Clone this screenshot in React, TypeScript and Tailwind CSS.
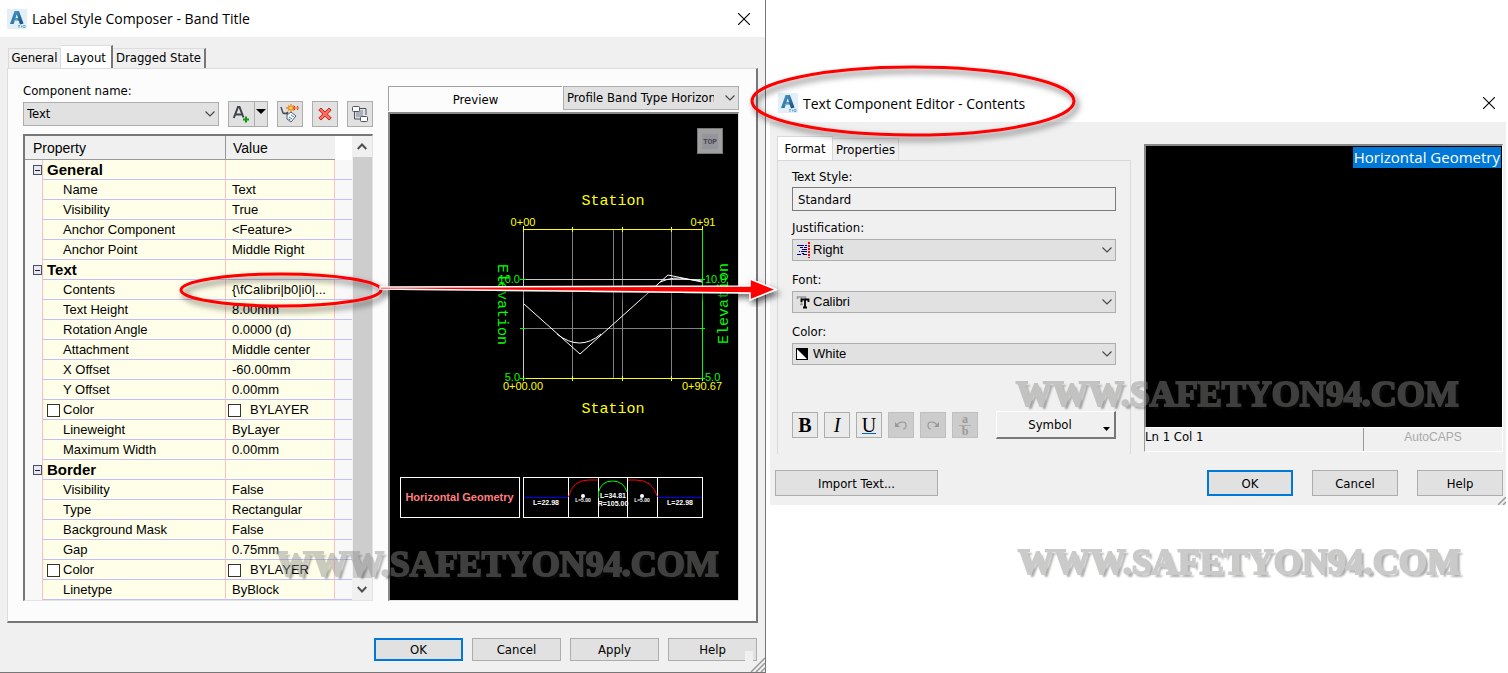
import type { ReactNode } from 'react'

const ui = 'font-["DejaVu_Sans_Condensed","Noto_Sans",sans-serif]'

type Row = { name: string; value?: string; group?: boolean; swatch?: boolean }

const rows: Row[] = [
  { name: 'General', group: true },
  { name: 'Name', value: 'Text' },
  { name: 'Visibility', value: 'True' },
  { name: 'Anchor Component', value: '<Feature>' },
  { name: 'Anchor Point', value: 'Middle Right' },
  { name: 'Text', group: true },
  { name: 'Contents', value: '{\\fCalibri|b0|i0|...' },
  { name: 'Text Height', value: '8.00mm' },
  { name: 'Rotation Angle', value: '0.0000 (d)' },
  { name: 'Attachment', value: 'Middle center' },
  { name: 'X Offset', value: '-60.00mm' },
  { name: 'Y Offset', value: '0.00mm' },
  { name: 'Color', value: 'BYLAYER', swatch: true },
  { name: 'Lineweight', value: 'ByLayer' },
  { name: 'Maximum Width', value: '0.00mm' },
  { name: 'Border', group: true },
  { name: 'Visibility', value: 'False' },
  { name: 'Type', value: 'Rectangular' },
  { name: 'Background Mask', value: 'False' },
  { name: 'Gap', value: '0.75mm' },
  { name: 'Color', value: 'BYLAYER', swatch: true },
  { name: 'Linetype', value: 'ByBlock' },
]

function AppLogo() {
  return (
    <svg className="h-5 w-5 shrink-0" viewBox="0 0 20 20" aria-hidden="true">
      <defs>
        <linearGradient id="logo" x1="0" y1="0" x2="1" y2="1">
          <stop offset="0" stopColor="#4fa3cf" />
          <stop offset="1" stopColor="#124a7c" />
        </linearGradient>
      </defs>
      <rect width="20" height="20" fill="#e3eef6" />
      <path d="M7.5 2H12l4.500 12.500-3.500 1-1.300-3.800H7.800L6.500 15H3z M9.800 5.200 8.400 9.300h2.700z" fill="url(#logo)" fillRule="evenodd" />
      <path d="M3 15l4-3.300 4.700 0-1.200-1.200H8z" fill="#8cc7e6" />
      <path d="M11 16.500h2M11 18h2M14.500 16.500v2M16 16.500h2v2h-2z" stroke="#6aaed6" fill="none" />
    </svg>
  )
}

function CloseButton() {
  return (
    <button type="button" aria-label="Close" className="p-1">
      <svg className="h-3 w-3" viewBox="0 0 12 12" stroke="#000" strokeWidth="1.1">
        <path d="M0 0l12 12M12 0L0 12" />
      </svg>
    </button>
  )
}

function Chevron({ className }: { className: string }) {
  return (
    <svg className={className} viewBox="0 0 10 6" fill="none" stroke="#444" strokeWidth="1.1" aria-hidden="true">
      <path d="M.5.5L5 5 9.500.5" />
    </svg>
  )
}

function DropDown({ label, id, value, size, icon }: { label: string; id: string; value: string; size: string; icon?: ReactNode }) {
  return (
    <div className="relative min-w-0">
      <select
        id={id}
        aria-label={label}
        className={`block w-full appearance-none border border-[#adadad] bg-[#e1e1e1] pr-6 ${size}`}
      >
        <option>{value}</option>
      </select>
      {icon && <span className="pointer-events-none absolute inset-y-0 left-1 flex items-center">{icon}</span>}
      <Chevron className="pointer-events-none absolute right-1 top-1/2 h-[6px] w-[10px] -translate-y-1/2" />
    </div>
  )
}

function DialogButton({ children, primary, className = '' }: { children: ReactNode; primary?: boolean; className?: string }) {
  return (
    <button
      type="button"
      className={`bg-[#e1e1e1] text-center leading-none ${primary ? 'border-2 border-[#0078d7]' : 'border border-[#adadad]'} ${className}`}
    >
      {children}
    </button>
  )
}

function ToolButton({ label, children }: { label: string; children: ReactNode }) {
  return (
    <button
      type="button"
      aria-label={label}
      className="flex h-[26px] w-[26px] shrink-0 items-center justify-center border border-[#adadad] bg-[#e1e1e1]"
    >
      {children}
    </button>
  )
}

function Toolbar() {
  return (
    <div className="flex items-center gap-[9px]">
      <div className="min-w-0 flex-1">
        <DropDown id="component" label="Component name" value="Text" size="h-6 pl-[3px]" />
      </div>
      <div className="flex h-[26px] w-10 shrink-0 border border-[#adadad] bg-[#e1e1e1]">
        <button type="button" aria-label="Create text component" className="flex flex-1 items-center justify-center border-r border-[#adadad]">
          <svg className="h-[18px] w-5" viewBox="0 0 20 18">
            <path d="M1.800 13L6 2h1.500l4 10.500M3.500 9.500h6.500" fill="none" stroke="#3d4450" strokeWidth="2" />
            <path d="M11 14.500h6M14 11.500v6" stroke="#0a9a0a" strokeWidth="2" />
          </svg>
        </button>
        <button type="button" aria-label="Component types" className="flex w-3 justify-center pt-[7px]">
          <svg className="h-[5px] w-[10px]" viewBox="0 0 10 5"><path d="M0 0h10L5 5z" /></svg>
        </button>
      </div>
      <ToolButton label="Copy component">
        <svg className="h-5 w-5" viewBox="0 0 20 20" fill="none">
          <path d="M1 3l2 6c2 1 4 0 5-1M3 9l5 1" stroke="#444b55" strokeWidth="1.400" />
          <path d="M7 11l4-3 5 4-5 6-4-3z" fill="#fff" stroke="#555e6a" />
          <path d="M9 13l3 2M11 11l3 2M8.500 15l2 1" stroke="#38a" />
          <path d="M6 4h10M8 1.500l6 5M14 1.500l-6 5M11 0v8" stroke="#e8861c" strokeWidth="1.300" />
          <path d="M13 4h6M14 2l4 4M18 2l-4 4" stroke="#e02a10" />
          <circle cx="11" cy="4" r="1.500" fill="#ffe34d" />
          <circle cx="16" cy="4" r="1" fill="#ffd34d" />
        </svg>
      </ToolButton>
      <ToolButton label="Delete component">
        <svg className="h-[14px] w-[14px]" viewBox="0 0 14 14">
          <path d="M3 1l4 4 4-4 2.200 2.200L9.300 7l4 4L11 13 7 9.200 3 13 .8 11l4-4-4-4z" fill="#ff6a5c" stroke="#c02a22" />
        </svg>
      </ToolButton>
      <ToolButton label="Component draw order">
        <svg className="h-4 w-4" viewBox="0 0 16 16" stroke="#4a515c" fill="#fff">
          <path d="M7 2.500h7V9" fill="none" />
          <path d="M2.500 6v7H9" fill="none" />
          <rect x="4" y="4" width="7" height="7" fill="#a8b0bc" stroke="none" />
          <rect x=".5" y=".5" width="7" height="5" rx="1" />
          <rect x="8.500" y="10.500" width="7" height="5" rx="1" />
        </svg>
      </ToolButton>
    </div>
  )
}

function PropertyRow({ row }: { row: Row }) {
  const { name, value, group, swatch } = row
  return (
    <tr className="h-5">
      <td className="border-r border-[#ffc0c0] bg-[#f8f8f8] p-0">
        {group && (
          <button type="button" aria-label={`Collapse ${name}`} className="ml-2 flex h-[10px] w-[9px] items-center justify-center border border-[#4a4f60] bg-[#e8e8f4]">
            <span className="h-px w-[5px] bg-[#222]" />
          </button>
        )}
      </td>
      <td className={`border-r border-b border-r-[#ffc0c0] border-b-[#c0c0ff] bg-[#ffffe9] p-0 ${group ? 'pl-1 text-[15px] font-bold' : swatch ? 'pl-1' : 'pl-5'}`}>
        <span className="flex items-center gap-[3px] pt-px leading-[18px]">
          {swatch && <input type="checkbox" aria-label={`Override ${name}`} className="h-[13px] w-[13px] appearance-none border border-[#333] bg-white" />}
          {name}
        </span>
      </td>
      <td className={`border-r border-b border-r-[#ffc0c0] border-b-[#c0c0ff] bg-[#ffffe9] p-0 ${swatch ? 'pl-[2px]' : 'pl-[6px]'}`}>
        <span className="flex items-center gap-[9px] pt-px leading-[18px]">
          {swatch && <span className="h-[13px] w-[13px] border border-[#333] bg-white" />}
          {value}
        </span>
      </td>
      <td className="border-b border-[#c0c0ff] bg-[#f8f8f8] p-0" />
    </tr>
  )
}

function PropertyGrid() {
  return (
    <div className="mt-[7px] flex border-2 border-r border-b border-t-[#777] border-r-[#e3e3e3] border-b-[#e3e3e3] border-l-[#777] font-['Liberation_Sans',sans-serif] text-[13px]">
      <table className="min-w-0 flex-1 table-fixed border-separate border-spacing-0">
        <colgroup>
          <col className="w-[18px]" />
          <col />
          <col className="w-[109px]" />
          <col className="w-[17px]" />
        </colgroup>
        <thead>
          <tr className="h-6 text-left text-sm">
            <th colSpan={2} className="border-r border-b border-[#999] bg-[#f0f0f0] p-0 pl-2 font-normal">Property</th>
            <th className="border-b border-[#999] bg-[#f0f0f0] p-0 pl-[7px] font-normal">Value</th>
            <th className="bg-white p-0" />
          </tr>
        </thead>
        <tbody>
          {rows.map((row, i) => <PropertyRow key={i} row={row} />)}
        </tbody>
      </table>
      <div className="flex w-5 flex-col items-center justify-between bg-[#f0f0f0]">
        <button type="button" aria-label="Scroll up" className="flex h-[21px] items-center">
          <svg className="h-[7px] w-[10px]" viewBox="0 0 10 7" fill="none" stroke="#505050" strokeWidth="2"><path d="M.7 6L5 1.500 9.300 6" /></svg>
        </button>
        <div className="w-[19px] flex-1 bg-[#cdcdcd]" />
        <button type="button" aria-label="Scroll down" className="flex h-[22px] items-center">
          <svg className="h-[7px] w-[10px]" viewBox="0 0 10 7" fill="none" stroke="#505050" strokeWidth="2"><path d="M.7 1L5 5.500 9.300 1" /></svg>
        </button>
      </div>
    </div>
  )
}

function ProfilePreview() {
  return (
    <svg className="block h-[486px] w-full" viewBox="0 0 348 486" fill="none" aria-label="Profile view preview">
      <rect x="307.500" y="14.500" width="25" height="25" fill="#a0a0a0" stroke="#777" />
      <rect x="312" y="20" width="16" height="15" fill="#94949c" />
      <text x="320" y="30" fontSize="7" fontWeight="700" textAnchor="middle" fill="#44444c" fontFamily="Roboto">TOP</text>

      <g shapeRendering="crispEdges">
        <path d="M182.500 115v149M223.500 115v149M232.500 115v149M281.500 115v149M133 214.500h179" stroke="#808080" />
        <path d="M133.500 115v149M133 165.500h179" stroke="#c8c8c8" />
        <path d="M133 115.500h180M133 264.500h180M133.500 112v6M182.500 113v5M232.500 113v5M281.500 113v5M312.500 112v6M182.500 262v5M232.500 262v5M281.500 262v5M133.500 262v5M312.500 262v5" stroke="#ff0" />
        <path d="M312.500 116v148M130 165.500h6M130 214.500h5M130 264.500h6M310 165.500h5M310 214.500h5M310 264.500h5" stroke="#0f0" />
      </g>
      <path d="M134 190l56 50 88-79 34 7M167 220q23 18 44 0M270 168q14-6 26-3l16 2" stroke="#fff" />

      <g fill="#ff0" fontFamily="Liberation Mono" fontSize="15" textAnchor="middle">
        <text x="223" y="91">Station</text>
        <text x="223" y="299">Station</text>
      </g>
      <g fill="#ff0" fontFamily="Liberation Sans" fontSize="11" textAnchor="middle">
        <text x="133" y="112">0+00</text>
        <text x="313" y="112">0+91</text>
        <text x="133" y="276">0+00.00</text>
        <text x="312" y="276">0+90.67</text>
      </g>
      <g fill="#0f0" fontFamily="Liberation Sans" fontSize="11">
        <text x="130" y="169" textAnchor="end">10.0</text>
        <text x="315" y="169">10.0</text>
        <text x="130" y="267" textAnchor="end">5.0</text>
        <text x="315" y="267">5.0</text>
      </g>
      <g fill="#0f0" fontFamily="Liberation Mono" fontSize="15">
        <text transform="translate(108 150) rotate(90)">Elevation</text>
        <text transform="translate(338 230) rotate(-90)">Elevation</text>
      </g>

      <g shapeRendering="crispEdges" stroke="#fff">
        <path d="M134 383.500h44M268 383.500h44" stroke="#00f" />
        <rect x="10.500" y="363.500" width="119" height="40" />
        <rect x="133.500" y="363.500" width="179" height="40" />
        <path d="M178.500 363v40M208.500 363v40M237.500 363v40M267.500 363v40" />
      </g>
      <path d="M178.500 383q4-17 20-17h9M238 366h8q17 0 21.500 17" stroke="#f00" />
      <path d="M208.500 384v-6q3-11 14-11t14.500 11" stroke="#0f0" />
      <text x="69.500" y="387" fontSize="11" fontWeight="700" textAnchor="middle" fill="#ff7f7f" fontFamily="Liberation Sans">Horizontal Geometry</text>
      <g fill="#fff" fontFamily="Liberation Sans" fontSize="7" fontWeight="700" textAnchor="middle">
        <text x="156" y="391">L=22.98</text>
        <text x="290" y="391">L=22.98</text>
        <text x="223" y="384">L=34.81</text>
        <text x="223" y="392">R=105.00</text>
        <text x="193" y="388" fontSize="5">L=5.00</text>
        <text x="252" y="388" fontSize="5">L=5.00</text>
        <circle cx="193" cy="382" r="2" />
        <circle cx="252" cy="382" r="2" />
      </g>
    </svg>
  )
}

function StyleComposer() {
  return (
    <section className="flex min-h-screen flex-col border-r border-b border-[#777] bg-[#f0f0f0]">
      <header className="flex h-[37px] items-center gap-[5px] bg-white pr-[11px] pl-[7px]">
        <AppLogo />
        <h1 className="flex-1 font-['Open_Sans',sans-serif] text-[14px]">Label Style Composer - Band Title</h1>
        <CloseButton />
      </header>

      <div role="tablist" className="mt-2 flex items-end pl-2">
        <button role="tab" className="h-5 w-[53px] border border-b-0 border-[#d9d9d9] pb-[3px] leading-none">General</button>
        <button role="tab" aria-selected="true" className="h-[23px] w-[52px] border-t border-r-2 border-t-[#ddd] border-r-[#777] bg-white leading-none">Layout</button>
        <button role="tab" className="h-5 w-[93px] border-t border-r-2 border-t-[#ddd] border-r-[#777] pb-[3px] leading-none whitespace-nowrap">Dragged State</button>
      </div>

      <div className="mr-[7px] ml-[7px] grid grid-cols-[350fr_351fr] gap-[15px] border-r-2 border-b-2 border-t border-l border-t-[#ddd] border-r-[#777] border-b-[#777] border-l-[#ddd] bg-[#fcfcfc] pr-[17px] pb-5 pl-[15px]">
        <div className="min-w-0 pt-3">
          <label htmlFor="component" className="block h-5 leading-5">Component name:</label>
          <Toolbar />
          <PropertyGrid />
        </div>
        <div className="min-w-0 pt-[17px]">
          <div className="flex h-[26px] items-start">
            <div className="mr-px h-[25px] flex-1 border-t border-l border-[#a0a0a0] text-center leading-[25px]">Preview</div>
            <div className="w-44">
              <DropDown id="band" label="Preview style" value="Profile Band Type Horizontal Geometry" size="h-6 pl-[3px]" />
            </div>
          </div>
          <div className="border-t-2 border-r border-b border-l-2 border-t-[#888] border-r-[#e3e3e3] border-b-[#e3e3e3] border-l-[#888] bg-black">
            <ProfilePreview />
          </div>
        </div>
      </div>

      <footer className="relative mt-[15px] flex flex-1 items-start justify-end gap-[9px] pr-2">
        <DialogButton primary className="h-[23px] w-[89px]">OK</DialogButton>
        <DialogButton className="h-[23px] w-[89px]">Cancel</DialogButton>
        <DialogButton className="h-[23px] w-[89px]">Apply</DialogButton>
        <DialogButton className="h-[23px] w-[89px]">Help</DialogButton>
        <ResizeGrip />
      </footer>
    </section>
  )
}

function ResizeGrip() {
  return (
    <svg className="absolute right-0 bottom-0 h-[21px] w-5" viewBox="0 0 20 21" stroke="#999" strokeWidth="1.500" aria-hidden="true">
      <rect x="0" y="0" width="8" height="10" fill="#f0f0f0" stroke="none" />
      <path d="M6 21L20 7M11 21l9-9M16 21l4-4" />
    </svg>
  )
}

const justifyIcon = (
  <svg className="h-4 w-[15px]" viewBox="0 0 15 16" shapeRendering="crispEdges">
    <path d="M1 3.500h7M9 3.500h2M4 5.500h3M8 5.500h3M6 7.500h5M3 9.500h1M5 9.500h6M6 11.500h2M1 12.500h4M7 12.500h4" stroke="#000080" />
    <path d="M13 0v16" stroke="#f00" strokeWidth="2" strokeDasharray="2 1" />
  </svg>
)

const fontIcon = (
  <svg className="h-[14px] w-[14px]" viewBox="0 0 14 14">
    <path d="M1.500 4V2h8v2M5.500 2v7M4 9.500h3" stroke="#999" strokeWidth="1.500" fill="none" />
    <path d="M5.500 7V4.500h7V7M9 4.500v8M7 12.500h4" stroke="#000" strokeWidth="1.800" fill="none" />
  </svg>
)

const colorIcon = (
  <svg className="h-3 w-3" viewBox="0 0 12 12">
    <rect x=".5" y=".5" width="11" height="11" fill="#fff" stroke="#000" />
    <path d="M0 0h12v12z" />
  </svg>
)

function FormatButton({ label, disabled, children }: { label: string; disabled?: boolean; children: ReactNode }) {
  return (
    <button
      type="button"
      aria-label={label}
      disabled={disabled}
      className={`flex h-[26px] w-[26px] items-center justify-center border font-['Liberation_Serif',serif] text-[20px] leading-none ${disabled ? 'border-[#bfbfbf] bg-[#ccc] text-[#999]' : 'border-[#adadad] bg-[#eaeaea]'}`}
    >
      {children}
    </button>
  )
}

function FormatPanel() {
  const field = 'h-[22px] pl-5 font-["Liberation_Sans",sans-serif] text-[13px]'
  return (
    <div className="min-w-0">
      <div role="tablist" className="flex items-end">
        <button role="tab" aria-selected="true" className="h-6 w-[56px] border border-b-0 border-[#d9d9d9] bg-white">Format</button>
        <button role="tab" className="h-[22px] w-[66px] border border-b-0 border-l-0 border-[#d9d9d9]">Properties</button>
      </div>
      <div className="border border-b-0 border-[#d9d9d9] pt-[5px] pr-[14px] pb-[15px] pl-[14px]">
        <label htmlFor="style" className="block h-[21px] leading-[21px]">Text Style:</label>
        <input id="style" readOnly value="Standard" className="block h-6 w-full border border-[#7a7a7a] bg-[#f0f0f0] pl-[5px]" />
        <label htmlFor="justify" className="mt-[6px] block h-[22px] leading-[22px]">Justification:</label>
        <DropDown id="justify" label="Justification" value="Right" size={field} icon={justifyIcon} />
        <label htmlFor="font" className="mt-2 block h-[22px] leading-[22px]">Font:</label>
        <DropDown id="font" label="Font" value="Calibri" size={field} icon={fontIcon} />
        <label htmlFor="color" className="mt-2 block h-[22px] leading-[22px]">Color:</label>
        <DropDown id="color" label="Color" value="White" size={field} icon={colorIcon} />
        <div className="mt-[46px] flex items-center gap-[6px]">
          <FormatButton label="Bold"><b>B</b></FormatButton>
          <FormatButton label="Italic"><i>I</i></FormatButton>
          <FormatButton label="Underline"><span className="border-b border-[#06c] leading-4">U</span></FormatButton>
          <FormatButton label="Undo" disabled>
            <svg className="h-3 w-3" viewBox="0 0 12 12" fill="none" stroke="currentColor" strokeWidth="1.200">
              <path d="M2 6q2-3 5.500-3T11 6.500 8 10" />
              <path d="M0 3v5h5z" fill="currentColor" stroke="none" />
            </svg>
          </FormatButton>
          <FormatButton label="Redo" disabled>
            <svg className="h-3 w-3" viewBox="0 0 12 12" fill="none" stroke="currentColor" strokeWidth="1.200">
              <path d="M10 6Q8 3 4.500 3T1 6.500 4 10" />
              <path d="M12 3v5H7z" fill="currentColor" stroke="none" />
            </svg>
          </FormatButton>
          <FormatButton label="Stack" disabled>
            <span className="flex flex-col items-center text-[12px] leading-[9px] font-bold">
              <span>a</span>
              <span className="my-px h-px w-3 bg-[#aaa]" />
              <span>b</span>
            </span>
          </FormatButton>
          <button type="button" className="ml-auto flex h-7 w-[120px] items-center border border-t-white border-r-2 border-b-2 border-l-white border-r-[#777] border-b-[#777] bg-[#f0f0f0]">
            <span className="flex-1">Symbol</span>
            <svg className="mt-[9px] mr-1 h-1 w-[7px]" viewBox="0 0 7 4"><path d="M0 0h7L3.500 4z" /></svg>
          </button>
        </div>
      </div>
    </div>
  )
}

function TextEditor() {
  return (
    <section className="ml-1 mt-[84px] mr-[2px]">
      <header className="flex h-[38px] items-center gap-[5px] bg-white pr-[7px] pl-2">
        <AppLogo />
        <h2 className="flex-1 font-['Open_Sans',sans-serif] text-[14px]">Text Component Editor - Contents</h2>
        <CloseButton />
      </header>
      <div className="relative bg-[#f0f0f0] pt-[14px] pb-[9px]">
        <div className="grid grid-cols-[354fr_359fr] gap-[13px] pr-[3px] pl-[7px]">
          <FormatPanel />
          <div className="mt-2 flex min-w-0 flex-col">
            <div className="h-[284px] border-t-2 border-r border-b border-l-2 border-t-[#888] border-r-white border-b-white border-l-[#888] bg-black text-right">
              <span className="mt-px mr-px inline-block bg-[#0078d7] px-px font-['Open_Sans',sans-serif] text-[15px] leading-[21px] text-white">Horizontal Geometry</span>
            </div>
            <div className="flex h-6 border-b border-l border-b-white border-l-[#999]">
              <div className="flex-1 border-r border-[#999] leading-[18px]">Ln 1 Col 1</div>
              <div className="w-[139px] border-r border-white text-center font-['Liberation_Sans',sans-serif] text-[12px] leading-[18px] text-[#a8a8a8]">AutoCAPS</div>
            </div>
          </div>
        </div>
        <footer className="mt-4 flex justify-between pr-[3px] pl-[5px]">
          <DialogButton className="h-[26px] w-[163px]">Import Text...</DialogButton>
          <div className="flex gap-[19px]">
            <DialogButton primary className="h-[26px] w-[86px]">OK</DialogButton>
            <DialogButton className="h-[26px] w-[86px]">Cancel</DialogButton>
            <DialogButton className="h-[26px] w-[86px]">Help</DialogButton>
          </div>
        </footer>
        <svg className="absolute right-0 bottom-0 h-2 w-2" viewBox="0 0 8 8" stroke="#999" strokeWidth="1.500" aria-hidden="true">
          <path d="M0 8l8-8M5 8l3-3" />
        </svg>
      </div>
    </section>
  )
}

// Red call-outs linking the Contents property to its editor.
function Callouts() {
  return (
    <svg className="pointer-events-none absolute top-0 left-0 h-[400px] w-[1100px]" viewBox="0 0 1100 400" fill="none">
      <defs>
        <filter id="shadow" x="-10%" y="-20%" width="120%" height="150%">
          <feDropShadow dx="3" dy="4" stdDeviation="3" floodColor="#000" floodOpacity=".6" />
        </filter>
      </defs>
      <g filter="url(#shadow)" stroke="#f00" strokeWidth="3">
        <ellipse cx="281" cy="290" rx="100" ry="16" />
        <ellipse cx="913" cy="101" rx="161" ry="34" />
      </g>
      <path d="M380 287l370-1v-7l26 10.500L750 300v-7L380 289z" fill="#f00" stroke="#fff" strokeWidth="1.500" filter="url(#shadow)" />
    </svg>
  )
}

function Watermark({ className }: { className: string }) {
  return (
    <p className={`pointer-events-none absolute font-['Liberation_Serif',serif] text-[36px] leading-9 font-bold text-[#8c8c89] opacity-45 [-webkit-text-stroke:2px_#8c8c89] [text-shadow:3px_3px_2px_rgb(30_30_30/0.8)] ${className}`}>
      WWW.SAFETYON94.COM
    </p>
  )
}

export default function App() {
  return (
    <main className={`relative grid min-h-screen grid-cols-[766fr_742fr] overflow-hidden bg-white text-[13px] text-black ${ui}`}>
      <StyleComposer />
      <TextEditor />
      <Callouts />
      <Watermark className="top-[546px] left-[276px]" />
      <Watermark className="top-[376px] left-[1016px]" />
      <Watermark className="top-[544px] left-[1018px]" />
    </main>
  )
}
